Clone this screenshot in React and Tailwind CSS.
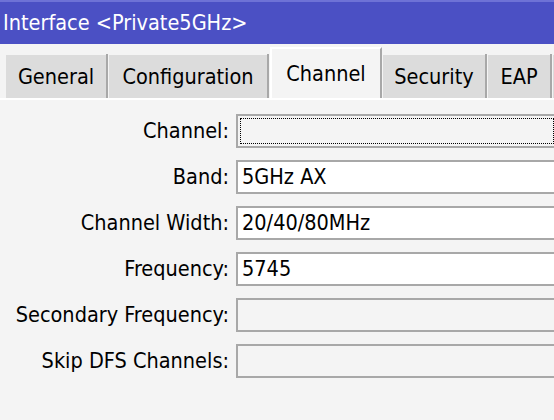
import React from 'react';

const tabs = [
  { name: 'General', w: 'w-[100px]' },
  { name: 'Configuration', w: 'w-[158px]' },
  { name: 'Channel', w: 'w-[112px]', active: true },
  { name: 'Security', w: 'w-[102px]' },
  { name: 'EAP', w: 'w-[62px]' },
];

const rows = [
  { label: 'Channel:', value: '', focus: true },
  { label: 'Band:', value: '5GHz AX' },
  { label: 'Channel Width:', value: '20/40/80MHz' },
  { label: 'Frequency:', value: '5745' },
  { label: 'Secondary Frequency:', value: '', disabled: true },
  { label: 'Skip DFS Channels:', value: '', disabled: true },
];

const Tab = ({ tab }) => {
  if (tab.active) {
    return (
      <div className={`${tab.w} h-[51px] flex items-center justify-center bg-[#f4f4f4] border-t-2 border-l-2 border-t-white border-l-white border-r-2 border-r-[#a8a8a8] mr-[1px]`}>
        Channel
      </div>
    );
  }
  return (
    <>
      <div className={`${tab.w} h-[43px] flex items-center justify-center bg-[#dcdcdc]`}>
        {tab.name}
      </div>
      <div className="w-[2px] h-[44px] bg-[#a8a8a8] mr-[1px]" />
    </>
  );
};

export default function App() {
  return (
    <div
      className="w-[554px] h-[420px] overflow-hidden bg-[#f4f4f4] text-black text-[21.5px] leading-none"
      style={{ fontFamily: '"DejaVu Sans Condensed", "DejaVu Sans", sans-serif' }}
    >
      {/* title bar */}
      <div className="h-[44px] bg-[#4b50c4] border-t-2 border-[#6e72d6] flex items-center pl-[3px] text-white">
        Interface &lt;Private5GHz&gt;
      </div>

      {/* tabs */}
      <div className="h-[56px] flex items-end pl-[6px] border-b-2 border-white">
        {tabs.map((t) => (
          <Tab key={t.name} tab={t} />
        ))}
        <div className="flex-1 h-[43px] bg-[#dcdcdc]" />
      </div>

      {/* form */}
      <div className="flex flex-col gap-[12px] pt-[14px]">
        {rows.map((r) => (
          <div key={r.label} className="flex items-center h-[34px]">
            <div className="w-[230px] shrink-0 text-right pr-[1px]">{r.label}</div>
            {r.focus ? (
              <div className="ml-[6px] flex-1 h-[34px] border-2 border-[#a8a8a8] border-r-0 p-[2px] pr-0 bg-[#f4f4f4]">
                <div className="w-full h-full border border-dotted border-black" />
              </div>
            ) : (
              <div
                className={`ml-[6px] flex-1 h-[34px] border-2 border-[#a8a8a8] border-r-0 flex items-center pl-[4px] ${
                  r.disabled ? 'bg-[#f4f4f4]' : 'bg-white'
                }`}
              >
                {r.value}
              </div>
            )}
          </div>
        ))}
      </div>
    </div>
  );
}
